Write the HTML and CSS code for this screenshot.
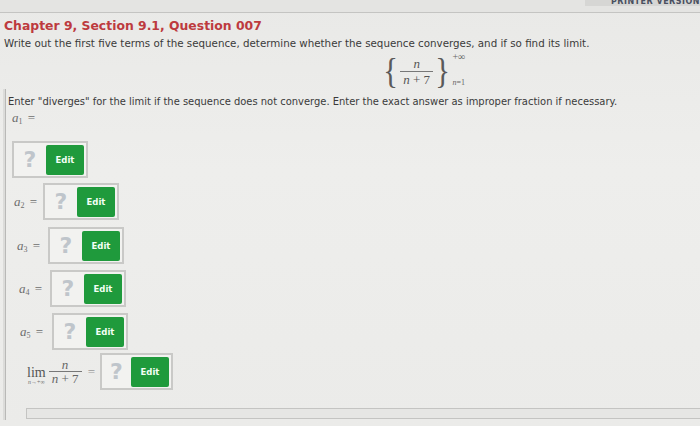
FILE: index.html
```html
<!DOCTYPE html>
<html>
<head>
<meta charset="utf-8">
<link rel="stylesheet" href="styles.css">
</head>
<body>
<div class="page">
  <div class="topbar"><span class="printer">PRINTER VERSION</span></div>
  <div class="question">
    <h1 class="title">Chapter 9, Section 9.1, Question 007</h1>
    <p class="prompt">Write out the first five terms of the sequence, determine whether the sequence converges, and if so find its limit.</p>
    <div class="formula">
      <span class="brace">{</span>
      <span class="frac"><span class="num">n</span><span class="den"><i>n</i> + 7</span></span>
      <span class="brace">}</span>
      <span class="limits"><span class="sup">+∞</span><span class="sub"><i>n</i>=1</span></span>
    </div>
  </div>
  <div class="panel">
    <p class="note">Enter "diverges" for the limit if the sequence does not converge. Enter the exact answer as improper fraction if necessary.</p>
    <div class="var-line"><i>a</i><sub>1</sub> <span class="eqs">=</span></div>
    <div class="answer first"><span class="q">?</span><span class="edit">Edit</span></div>
    <div class="row r2"><span class="lbl"><i>a</i><sub>2</sub> <span class="eqs">=</span></span><div class="answer"><span class="q">?</span><span class="edit">Edit</span></div></div>
    <div class="row r3"><span class="lbl"><i>a</i><sub>3</sub> <span class="eqs">=</span></span><div class="answer"><span class="q">?</span><span class="edit">Edit</span></div></div>
    <div class="row r4"><span class="lbl"><i>a</i><sub>4</sub> <span class="eqs">=</span></span><div class="answer"><span class="q">?</span><span class="edit">Edit</span></div></div>
    <div class="row r5"><span class="lbl"><i>a</i><sub>5</sub> <span class="eqs">=</span></span><div class="answer"><span class="q">?</span><span class="edit">Edit</span></div></div>
    <div class="row rlim">
      <span class="limexpr">
        <span class="lim"><span class="limword">lim</span><span class="limsub"><i>n</i>→+∞</span></span>
        <span class="frac small"><span class="num">n</span><span class="den"><i>n</i> + 7</span></span>
      </span>
      <span class="eqs big">=</span>
      <div class="answer narrow"><span class="q">?</span><span class="edit">Edit</span></div>
    </div>
    <div class="footer-box"></div>
  </div>
</div>
</body>
</html>
```
FILE: styles.css
```css
html, body {
  margin: 0;
  padding: 0;
}
body {
  width: 700px;
  height: 426px;
  overflow: hidden;
  background: linear-gradient(180deg, #e9e9e7 0%, #eeeeec 40%, #ebebe9 100%);
  font-family: "DejaVu Sans", Verdana, sans-serif;
  color: #3c3c3c;
}
.page {
  width: 700px;
  height: 426px;
}
.topbar {
  height: 12px;
  border-bottom: 1px solid #c4c4c2;
  background: #e4e4e2;
  display: flex;
  justify-content: flex-end;
  overflow: hidden;
}
.printer {
  height: 6px;
  padding: 0 4px 0 26px;
  margin-right: -4px;
  font-size: 8px;
  font-weight: bold;
  line-height: 3px;
  letter-spacing: 0.5px;
  color: #4a5060;
  background: #d6d6d4;
  overflow: hidden;
}
.question {
  padding-left: 4px;
}
.title {
  margin: 5px 0 0;
  font-size: 12.4px;
  line-height: 15px;
  font-weight: bold;
  color: #bd3a3e;
}
.prompt {
  margin: 4px 0 0;
  font-size: 10.3px;
  line-height: 13px;
  color: #3a3a3a;
}
.formula {
  margin: 3px 0 0 378px;
  height: 36px;
  display: flex;
  align-items: center;
  font-family: "Liberation Serif", "Times New Roman", serif;
  color: #555;
}
.brace {
  font-size: 36px;
  line-height: 34px;
  color: #5a5a5a;
  transform: scaleX(0.85);
}
.frac {
  display: inline-flex;
  flex-direction: column;
  align-items: center;
  margin: 0 1px;
}
.frac .num {
  font-style: italic;
  font-size: 13px;
  line-height: 15px;
  padding: 0 4px;
}
.frac .den {
  font-size: 13px;
  line-height: 15px;
  border-top: 1px solid #777;
  padding: 0 3px;
  font-style: normal;
}
.limits {
  display: flex;
  flex-direction: column;
  justify-content: space-between;
  height: 34px;
  font-size: 10px;
  line-height: 10px;
  margin-left: 1px;
  color: #666;
}
.sup {
  margin-top: -2px;
}
.sub {
  font-size: 8px;
}
.panel {
  margin-left: 5px;
  border-left: 1px solid #b9b9b7;
  padding-left: 6px;
  padding-top: 6px;
  height: 325px;
  box-shadow: -2px 0 0 #dcdcda;
}
.note {
  margin: 0 0 0 -4px;
  font-size: 9.95px;
  line-height: 13px;
  color: #3a3a3a;
}
.var-line, .lbl, .limexpr, .eqs {
  font-family: "Liberation Serif", "Times New Roman", serif;
  color: #6e6e6e;
}
.var-line {
  margin-top: 3px;
  font-size: 13px;
  line-height: 14px;
}
.var-line sub, .lbl sub {
  font-size: 8px;
  font-style: normal;
  vertical-align: -2px;
  line-height: 0;
}
.eqs {
  font-size: 13px;
  padding-left: 2px;
}
.answer {
  box-sizing: border-box;
  width: 76px;
  height: 37px;
  border: 2px solid #c9c9c7;
  background: #f2f2f0;
  display: flex;
  align-items: center;
  justify-content: flex-end;
  padding-right: 2px;
}
.answer.first {
  margin-top: 16px;
}
.answer.narrow {
  width: 73px;
}
.q {
  flex: 1;
  text-align: center;
  font-size: 22px;
  font-weight: bold;
  color: #bfc5cb;
  line-height: 22px;
}
.edit {
  width: 38px;
  height: 30px;
  background: #1f9a3c;
  border-radius: 2px;
  color: #f4fff6;
  font-size: 8.5px;
  font-weight: bold;
  display: flex;
  align-items: center;
  justify-content: center;
}
.row {
  margin-top: 6px;
  display: flex;
  align-items: center;
}
.lbl {
  width: 31px;
  font-size: 13px;
  padding-left: 2px;
  box-sizing: border-box;
  flex: none;
}
.row.r2 { margin-top: 5px; }
.row.r3 { margin-left: 3px; margin-top: 7px; }
.row.r3 .lbl { width: 33px; }
.row.r4 { margin-left: 5px; }
.row.r4 .lbl { width: 33px; }
.row.r5 { margin-left: 6px; }
.row.r5 .lbl { width: 34px; }
.row.rlim {
  margin-left: 15px;
  margin-top: 3px;
}
.limexpr {
  display: flex;
  align-items: center;
  width: 58px;
  flex: none;
}
.lim {
  display: inline-flex;
  flex-direction: column;
  align-items: center;
  margin-top: 10px;
  margin-right: 2px;
}
.limword {
  font-size: 14px;
  line-height: 12px;
  color: #555;
}
.limsub {
  font-size: 6px;
  line-height: 7px;
}
.frac.small .num,
.frac.small .den {
  font-size: 13px;
  line-height: 13px;
  color: #666;
}
.eqs.big {
  width: 13px;
  padding: 0;
  text-align: center;
  margin-right: 2px;
  color: #9a9a9a;
}
.footer-box {
  margin: 18px 0 0 14px;
  height: 9px;
  border: 1px solid #c4c4c2;
  border-right: none;
  background: #e6e6e4;
}
```
